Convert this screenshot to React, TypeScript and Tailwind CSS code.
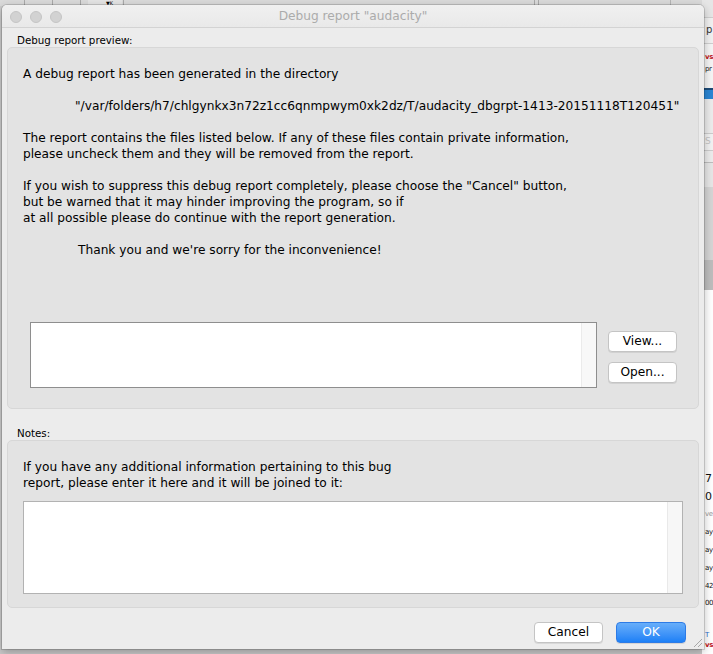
import React from "react";

const PREVIEW_LINES: { text: string; indent?: number }[] = [
  { text: "A debug report has been generated in the directory" },
  { text: "" },
  { text: "\"/var/folders/h7/chlgynkx3n72z1cc6qnmpwym0xk2dz/T/audacity_dbgrpt-1413-20151118T120451\"", indent: 52 },
  { text: "" },
  { text: "The report contains the files listed below. If any of these files contain private information," },
  { text: "please uncheck them and they will be removed from the report." },
  { text: "" },
  { text: "If you wish to suppress this debug report completely, please choose the \"Cancel\" button," },
  { text: "but be warned that it may hinder improving the program, so if" },
  { text: "at all possible please do continue with the report generation." },
  { text: "" },
  { text: "Thank you and we're sorry for the inconvenience!", indent: 55 },
];

// bits of the windows behind the dialog
function Backdrop() {
  return (
    <>
      <div className="absolute left-0 top-0 w-[713px] h-[6px] bg-[#dadada]">
        <div className="absolute left-[24px] top-0 w-px h-[6px] bg-[#a9a9a9]" />
        <div className="absolute left-[52px] top-0 w-px h-[6px] bg-[#a9a9a9]" />
        <div className="absolute left-[80px] top-0 w-px h-[6px] bg-[#a9a9a9]" />
        <div className="absolute left-[88px] top-0 w-[34px] h-[6px] bg-[#e4e4e4]" />
        <div className="absolute left-[123px] top-0 w-px h-[6px] bg-[#a9a9a9]" />
        <span className="absolute left-[106px] top-0 text-[5px] leading-[6px] text-black">▼K</span>
        <div className="absolute left-[534px] top-0 w-px h-[6px] bg-[#a9a9a9]" />
        <div className="absolute left-[538px] top-0 w-px h-[6px] bg-[#a9a9a9]" />
        <div className="absolute left-[670px] top-0 w-px h-[6px] bg-[#b5b5b5]" />
      </div>

      <div className="absolute left-[702px] top-0 w-[11px] h-[654px] flex flex-col text-[7px] leading-[9px] tracking-tighter">
        <div className="h-[17px] bg-[#e6e6e6]" />
        <div className="h-[27px] bg-[#f1f1f1] border-y border-[#cfcfcf] pl-[4px] pt-[7px] text-[10px] text-[#333]">p</div>
        <div className="h-[44px] bg-[#f5f5f5] pl-[3px] pt-[9px]">
          <div className="h-[12px] font-bold text-[#c0141b]">vs</div>
          <div className="text-[#222]">pr</div>
        </div>
        <div className="h-[2px] bg-[#1d4b78]" />
        <div className="h-[9px] bg-[#2a86d4]" />
        <div className="h-[34px] bg-[#ececec]" />
        <div className="h-[18px] bg-[#f2f2f2] border-y border-[#cccccc] pl-[3px] pt-[3px] text-[9px] text-[#c4c4c4]">S</div>
        <div className="h-[12px] bg-[#ececec] border-b border-[#bdbdbd]" />
        <div className="h-[24px] bg-[#e6e6e6]" />
        <div className="h-[73px] bg-[#d5d5d5]" />
        <div className="h-[30px] bg-[#bdbdbd]" />
        <div className="h-[150px] bg-white" />
        <div className="h-[190px] bg-white pl-[3px] pt-[30px] text-[#111]">
          <div className="text-[11px] leading-[18px]">7</div>
          <div className="text-[11px] leading-[18px]">0</div>
          <div className="mt-[4px] h-[18px] text-[#999]">ve</div>
          <div className="h-[18px]">ay</div>
          <div className="h-[18px]">ay</div>
          <div className="h-[18px]">ay</div>
          <div className="h-[17px]">42</div>
          <div className="h-[17px]">00</div>
        </div>
        <div className="flex-1 bg-white pl-[3px] pt-[1px]">
          <div className="text-[#2a6fd0] h-[10px]">T</div>
          <div className="font-bold text-[#c0141b]">vs</div>
        </div>
      </div>

      <div className="absolute left-0 top-[649px] w-[702px] h-[5px] bg-[#c9c9c9]" />
    </>
  );
}

function PushButton({ label, primary }: { label: string; primary?: boolean }) {
  return (
    <button
      type="button"
      className={
        primary
          ? "w-[70px] h-[21px] rounded-[4px] border border-[#2d7be6] bg-gradient-to-b from-[#67aefa] to-[#1b80f6] text-white text-[12.2px] leading-none shadow-[0_1px_0_rgba(0,0,0,0.1)]"
          : "w-[69px] h-[21px] rounded-[4px] border border-[#c4c4c4] bg-white text-black text-[12.2px] leading-none shadow-[0_1px_0_rgba(0,0,0,0.08)]"
      }
    >
      {label}
    </button>
  );
}

export default function App() {
  return (
    <div className="relative w-[713px] h-[654px] overflow-hidden bg-[#cdcdcd] font-['DejaVu_Sans',sans-serif]">
      <Backdrop />

      {/* dialog window */}
      <div className="absolute left-[2px] top-[5px] w-[702px] h-[644px] bg-[#ececec] rounded-t-[5px] shadow-[0_0_0_1px_rgba(0,0,0,0.14),0_3px_10px_rgba(0,0,0,0.28)] flex flex-col">
        {/* title bar */}
        <div className="relative h-[23px] shrink-0 rounded-t-[5px] bg-gradient-to-b from-[#f0f0f0] to-[#e9e9e9] border-b border-[#d3d3d3] flex items-center justify-center">
          <div className="absolute left-[8px] top-[6px] flex gap-[8px]">
            <span className="w-[12px] h-[12px] rounded-full bg-[#d2d2d2] border border-[#c5c5c5]" />
            <span className="w-[12px] h-[12px] rounded-full bg-[#d2d2d2] border border-[#c5c5c5]" />
            <span className="w-[12px] h-[12px] rounded-full bg-[#d2d2d2] border border-[#c5c5c5]" />
          </div>
          <span className="text-[12.2px] text-[#ababab] leading-none">Debug report "audacity"</span>
        </div>

        <div className="h-[19px] pl-[15px] pt-[5px] text-[10.3px] leading-[14px] text-black">Debug report preview:</div>

        <div className="mx-[5px] h-[362px] rounded-[5px] bg-[#e3e3e3] border border-[#d7d7d7] flex flex-col">
          <div className="pl-[15px] pt-[18px] text-[12.2px] leading-[16px] text-black">
            {PREVIEW_LINES.map((line, i) => (
              <div key={i} className="h-[16px] whitespace-nowrap" style={line.indent ? { paddingLeft: line.indent } : undefined}>
                {line.text}
              </div>
            ))}
          </div>

          <div className="mt-[64px] pl-[22px] flex">
            <div className="w-[567px] h-[66px] border border-[#8e8e8e] bg-white flex justify-end">
              <div className="w-[15px] bg-[#f8f8f8] border-l border-[#ebebeb]" />
            </div>
            <div className="ml-[11px] pt-[9px] flex flex-col gap-[10px]">
              <PushButton label="View..." />
              <PushButton label="Open..." />
            </div>
          </div>
        </div>

        <div className="mt-[17px] h-[14px] pl-[15px] text-[10.3px] leading-[14px] text-black">Notes:</div>

        <div className="mx-[5px] h-[168px] rounded-[5px] bg-[#e3e3e3] border border-[#d7d7d7] flex flex-col">
          <div className="pl-[15px] pt-[18px] text-[12.2px] leading-[16px] text-black whitespace-nowrap">
            <div className="h-[16px]">If you have any additional information pertaining to this bug</div>
            <div className="h-[16px]">report, please enter it here and it will be joined to it:</div>
          </div>
          <div className="mt-[10px] ml-[15px] w-[660px] h-[93px] border border-[#b2b2b2] bg-white flex justify-end">
            <div className="w-[15px] bg-[#f7f7f7] border-l border-[#e9e9e9]" />
          </div>
        </div>

        <div className="mt-[14px] pr-[18px] flex justify-end gap-[13px]">
          <PushButton label="Cancel" />
          <PushButton label="OK" primary />
        </div>

        {/* resize grip */}
        <svg className="absolute right-[1px] bottom-[1px]" width="11" height="11" viewBox="0 0 11 11">
          <path d="M10 2 L2 10 M10 6 L6 10" stroke="#a8a8a8" strokeWidth="1" fill="none" />
        </svg>
      </div>
    </div>
  );
}
